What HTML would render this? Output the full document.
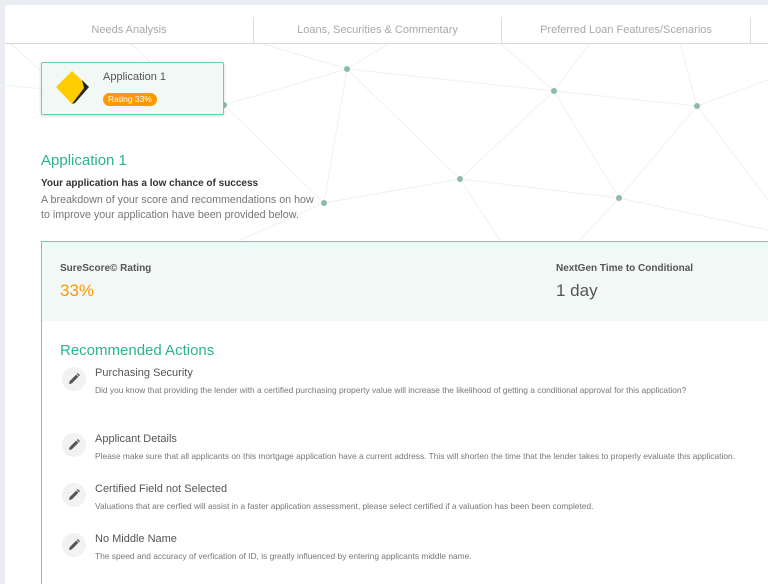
<!DOCTYPE html>
<html><head><meta charset="utf-8"><style>
*{margin:0;padding:0;box-sizing:border-box}
body{width:768px;height:584px;overflow:hidden;background:#e9edf1;font-family:"Liberation Sans",sans-serif;position:relative}
.page{position:absolute;left:5px;top:5px;width:763px;height:579px;background:#fff;border-radius:3px 0 0 0}
.a{position:absolute;white-space:nowrap}
.tab{position:absolute;top:17px;height:26px;font-size:11px;color:#a8a8a8;text-align:center;line-height:26px}
.ic{position:absolute;width:24px;height:24px;border-radius:50%;background:#f2f2f2}
.ic svg{position:absolute;left:6px;top:6px}
.h{font-size:11px;color:#555}
.d{font-size:8.4px;color:#777}
</style></head><body>
<div class="page"></div>
<svg class="a" style="left:0;top:43px" width="768" height="200" viewBox="0 43 768 200">
<g stroke="#eef2f1" stroke-width="1" fill="none">
<line x1="224" y1="105" x2="347" y2="69"/><line x1="347" y1="69" x2="554" y2="91"/><line x1="554" y1="91" x2="697" y2="106"/>
<line x1="347" y1="69" x2="324" y2="203"/><line x1="347" y1="69" x2="460" y2="179"/><line x1="554" y1="91" x2="460" y2="179"/>
<line x1="554" y1="91" x2="619" y2="198"/><line x1="460" y1="179" x2="619" y2="198"/><line x1="324" y1="203" x2="460" y2="179"/>
<line x1="697" y1="106" x2="619" y2="198"/><line x1="697" y1="106" x2="768" y2="80"/><line x1="697" y1="106" x2="768" y2="200"/>
<line x1="347" y1="69" x2="390" y2="43"/><line x1="347" y1="69" x2="260" y2="43"/><line x1="554" y1="91" x2="500" y2="43"/>
<line x1="554" y1="91" x2="590" y2="43"/><line x1="697" y1="106" x2="680" y2="43"/><line x1="224" y1="105" x2="324" y2="203"/>
<line x1="0" y1="85" x2="224" y2="105"/><line x1="10" y1="43" x2="40" y2="70"/><line x1="130" y1="43" x2="150" y2="62"/>
<line x1="619" y1="198" x2="768" y2="230"/><line x1="324" y1="203" x2="240" y2="240"/><line x1="460" y1="179" x2="500" y2="240"/>
<line x1="619" y1="198" x2="580" y2="240"/>
</g>
<g fill="#8fb8b0"><circle cx="347" cy="69" r="3"/><circle cx="554" cy="91" r="3"/><circle cx="697" cy="106" r="3"/><circle cx="460" cy="179" r="3"/><circle cx="619" cy="198" r="3"/><circle cx="324" cy="203" r="3"/><circle cx="224" cy="105" r="3"/></g>
</svg>
<div class="a" style="left:5px;top:43px;width:763px;height:1px;background:#d8d8d8"></div>
<div class="tab" style="left:5px;width:248px">Needs Analysis</div>
<div class="a" style="left:253px;top:17px;width:1px;height:26px;background:#ddd"></div>
<div class="tab" style="left:254px;width:247px">Loans, Securities &amp; Commentary</div>
<div class="a" style="left:501px;top:17px;width:1px;height:26px;background:#ddd"></div>
<div class="tab" style="left:502px;width:248px">Preferred Loan Features/Scenarios</div>
<div class="a" style="left:750px;top:17px;width:1px;height:26px;background:#ddd"></div>

<div class="a" style="left:41px;top:62px;width:183px;height:53px;background:#f1f8f5;border:1px solid #6ccbb3;border-radius:2px;box-shadow:0 1px 3px rgba(0,0,0,.15)"></div>
<svg class="a" style="left:54px;top:70px" width="38" height="36"><polygon points="18,1 35,17 18,34 2,17" fill="#ffcc00"/><polygon points="28,10 35,17 21,33 18,34 30,18" fill="#222"/></svg>
<div class="a" style="left:103px;top:71px;font-size:11px;color:#555">Application 1</div>
<div class="a" style="left:103px;top:93px;height:13px;padding:0 5px;background:#ff9800;border-radius:7px;color:#fff;font-size:8.5px;line-height:13px">Rating 33%</div>

<div class="a" style="left:41px;top:152px;font-size:15px;color:#2bb38f">Application 1</div>
<div class="a" style="left:41px;top:178px;font-size:10px;font-weight:bold;color:#333">Your application has a low chance of success</div>
<div class="a" style="left:41px;top:193px;font-size:10.7px;color:#777;line-height:15px">A breakdown of your score and recommendations on how<br>to improve your application have been provided below.</div>

<div class="a" style="left:41px;top:241px;width:727px;height:343px;border:1px solid #6ccbb3;border-right:none;border-bottom:none;background:#fff"></div>
<div class="a" style="left:42px;top:242px;width:726px;height:79px;background:#f1f8f5"></div>
<div class="a" style="left:60px;top:263px;font-size:10px;font-weight:bold;color:#555">SureScore© Rating</div>
<div class="a" style="left:60px;top:281px;font-size:17px;color:#ff9800">33%</div>
<div class="a" style="left:556px;top:263px;font-size:10px;font-weight:bold;color:#555">NextGen Time to Conditional</div>
<div class="a" style="left:556px;top:281px;font-size:17px;color:#555">1 day</div>

<div class="a" style="left:60px;top:342px;font-size:15px;color:#2bb38f">Recommended Actions</div>

<div class="ic" style="left:62px;top:367px"><svg width="12" height="12" viewBox="0 0 12 12"><path d="M1 11l0.6-2.8 6.6-6.6 2.2 2.2-6.6 6.6z M8.8 1l1-1 2.2 2.2-1 1z" fill="#555"/></svg></div>
<div class="a h" style="left:95px;top:367px">Purchasing Security</div>
<div class="a d" style="left:95px;top:385px">Did you know that providing the lender with a certified purchasing property value will increase the likelihood of getting a conditional approval for this application?</div>

<div class="ic" style="left:62px;top:433px"><svg width="12" height="12" viewBox="0 0 12 12"><path d="M1 11l0.6-2.8 6.6-6.6 2.2 2.2-6.6 6.6z M8.8 1l1-1 2.2 2.2-1 1z" fill="#555"/></svg></div>
<div class="a h" style="left:95px;top:433px">Applicant Details</div>
<div class="a d" style="left:95px;top:451px">Please make sure that all applicants on this mortgage application have a current address. This will shorten the time that the lender takes to properly evaluate this application.</div>

<div class="ic" style="left:62px;top:483px"><svg width="12" height="12" viewBox="0 0 12 12"><path d="M1 11l0.6-2.8 6.6-6.6 2.2 2.2-6.6 6.6z M8.8 1l1-1 2.2 2.2-1 1z" fill="#555"/></svg></div>
<div class="a h" style="left:95px;top:483px">Certified Field not Selected</div>
<div class="a d" style="left:95px;top:501px">Valuations that are cerfied will assist in a faster application assessment, please select certified if a valuation has been been completed.</div>

<div class="ic" style="left:62px;top:533px"><svg width="12" height="12" viewBox="0 0 12 12"><path d="M1 11l0.6-2.8 6.6-6.6 2.2 2.2-6.6 6.6z M8.8 1l1-1 2.2 2.2-1 1z" fill="#555"/></svg></div>
<div class="a h" style="left:95px;top:533px">No Middle Name</div>
<div class="a d" style="left:95px;top:551px">The speed and accuracy of verfication of ID, is greatly influenced by entering applicants middle name.</div>
</body></html>
